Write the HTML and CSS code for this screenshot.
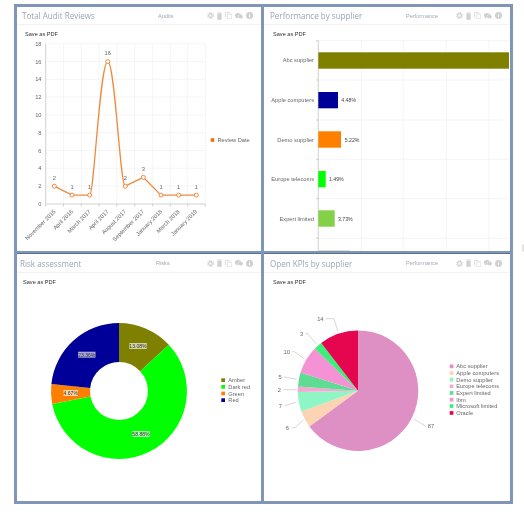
FILE: index.html
```
<!DOCTYPE html>
<html lang="en">
<head>
<meta charset="utf-8">
<title>Dashboard</title>
<link rel="stylesheet" href="styles.css">
</head>
<body>
<svg class="defs" width="0" height="0" aria-hidden="true">
  <symbol id="i-gear" viewBox="0 0 14 14"><circle cx="7" cy="7" r="3.6" fill="none" stroke="currentColor" stroke-width="2.4"/><circle cx="7" cy="7" r="5.8" fill="none" stroke="currentColor" stroke-width="2.2" stroke-dasharray="2.3 2.25"/></symbol>
  <symbol id="i-trash" viewBox="0 0 10 15"><path d="M3.5 0h3v1H10v1.6H0V1h3.5zM.8 3.6h8.4V15H.8z" fill="currentColor"/></symbol>
  <symbol id="i-copy" viewBox="0 0 14 14"><path d="M1 10V1h7l2 2" fill="none" stroke="currentColor" stroke-width="1.2"/><rect x="4.5" y="4" width="9" height="9.5" rx="1" fill="#fff" stroke="currentColor" stroke-width="1.2"/></symbol>
  <symbol id="i-chat" viewBox="0 0 16 12"><ellipse cx="6" cy="4.8" rx="6" ry="4.6" fill="currentColor"/><ellipse cx="11" cy="7" rx="5" ry="4" fill="currentColor" stroke="#fff" stroke-width=".7"/><path d="M13 10l2.5 2-4-1zM3 8l-2 3 4-1.500z" fill="currentColor"/></symbol>
  <symbol id="i-info" viewBox="0 0 14 14"><circle cx="7" cy="7" r="7" fill="currentColor"/><rect x="6" y="3" width="2" height="1.800" fill="#fff"/><rect x="6" y="6" width="2" height="5" fill="#fff"/></symbol>
</svg>

<main class="board">

  <section class="panel panel-a">
    <header class="head">
      <h2 class="title">Total Audit Reviews</h2>
      <span class="sub">Audits</span>
      <div class="tools">
        <svg class="ti ti-gear"><use href="#i-gear"/></svg>
        <svg class="ti ti-trash"><use href="#i-trash"/></svg>
        <svg class="ti ti-copy"><use href="#i-copy"/></svg>
        <svg class="ti ti-chat"><use href="#i-chat"/></svg>
        <svg class="ti ti-info"><use href="#i-info"/></svg>
      </div>
    </header>
    <div class="save">Save as PDF</div>
    <svg class="chart" viewBox="17 40 244 211">
      <g class="grid">
        <path d="M45.700 43.700H205.300M45.700 61.500H205.300M45.700 79.300H205.300M45.700 97.100H205.300M45.700 114.900H205.300M45.700 132.700H205.300M45.700 150.500H205.300M45.700 168.300H205.300M45.700 186.100H205.300"/>
        <path d="M63.500 43.700V204M81.300 43.700V204M99 43.700V204M116.700 43.700V204M134.700 43.700V204M152.700 43.700V204M170.300 43.700V204M187.700 43.700V204M205.300 43.700V204"/>
      </g>
      <path class="axis" d="M45.700 43.700V204H205.300M45.700 204v2.500M63.500 204v2.500M81.300 204v2.500M99 204v2.500M116.700 204v2.500M134.700 204v2.500M152.700 204v2.500M170.300 204v2.500M187.700 204v2.500M205.300 204v2.500"/>
      <g class="t t-end">
        <text x="41.500" y="45.800">18</text><text x="41.500" y="63.600">16</text><text x="41.500" y="81.400">14</text><text x="41.500" y="99.200">12</text><text x="41.500" y="117">10</text><text x="41.500" y="134.800">8</text><text x="41.500" y="152.600">6</text><text x="41.500" y="170.400">4</text><text x="41.500" y="188.200">2</text><text x="41.500" y="206">0</text>
      </g>
      <g class="t t-end">
        <text transform="translate(56 212) rotate(-45)">November 2015</text>
        <text transform="translate(73.500 212) rotate(-45)">April 2016</text>
        <text transform="translate(91 212) rotate(-45)">March 2017</text>
        <text transform="translate(109 212) rotate(-45)">April 2017</text>
        <text transform="translate(126.500 212) rotate(-45)">August 2017</text>
        <text transform="translate(144.500 212) rotate(-45)">September 2017</text>
        <text transform="translate(162.500 212) rotate(-45)">January 2018</text>
        <text transform="translate(180 212) rotate(-45)">March 2018</text>
        <text transform="translate(197.500 212) rotate(-45)">January 2019</text>
      </g>
      <path class="line" d="M54.300 186.200L72 195.100L89.700 195.100C94 195 100 61.600 107.700 61.600C115 61.600 120 186 125.300 186.200L143.300 177.300L161 195.100L196.300 195.100"/>
      <g class="pts">
        <circle cx="54.300" cy="186.200" r="2"/><circle cx="72" cy="195.100" r="2"/><circle cx="89.700" cy="195.100" r="2"/><circle cx="107.700" cy="61.600" r="2"/><circle cx="125.300" cy="186.200" r="2"/><circle cx="143.300" cy="177.300" r="2"/><circle cx="161" cy="195.100" r="2"/><circle cx="178.700" cy="195.100" r="2"/><circle cx="196.300" cy="195.100" r="2"/>
      </g>
      <g class="t t-mid">
        <text x="54.300" y="180">2</text><text x="72" y="189">1</text><text x="89.700" y="189">1</text><text x="107.700" y="55">16</text><text x="125.300" y="180">2</text><text x="143.300" y="171">3</text><text x="161" y="189">1</text><text x="178.700" y="189">1</text><text x="196.300" y="189">1</text>
      </g>
      <rect x="210.700" y="138.300" width="3.500" height="3.500" fill="#f26a10"/>
      <text class="t" x="217.500" y="142.200">Review Date</text>
    </svg>
  </section>

  <section class="panel panel-b">
    <header class="head">
      <h2 class="title">Performance by supplier</h2>
      <span class="sub">Performance</span>
      <div class="tools">
        <svg class="ti ti-gear"><use href="#i-gear"/></svg>
        <svg class="ti ti-trash"><use href="#i-trash"/></svg>
        <svg class="ti ti-copy"><use href="#i-copy"/></svg>
        <svg class="ti ti-chat"><use href="#i-chat"/></svg>
        <svg class="ti ti-info"><use href="#i-info"/></svg>
      </div>
    </header>
    <div class="save">Save as PDF</div>
    <svg class="chart" viewBox="264 40 246 211">
      <g class="grid">
        <path d="M318.300 40.700H510M318.300 80H510M318.300 120H510M318.300 159.300H510M318.300 198.700H510M318.300 238.300H510"/>
        <path d="M361.300 40.700V251M403.700 40.700V251M446.300 40.700V251M489 40.700V251"/>
      </g>
      <path class="axis" d="M318.300 40.700V251M316 40.700h2.300M316 80h2.300M316 120h2.300M316 159.300h2.300M316 198.700h2.300M316 238.300h2.300"/>
      <rect x="318.300" y="52.300" width="190.700" height="16.400" fill="#808000"/>
      <rect x="318.300" y="92" width="19.700" height="16.300" fill="#000099"/>
      <rect x="318.300" y="131.300" width="22.700" height="16.400" fill="#ff8000"/>
      <rect x="318.300" y="171" width="7.400" height="16.300" fill="#00ff00"/>
      <rect x="318.300" y="210.300" width="16.400" height="16.400" fill="#84d046"/>
      <rect x="318.300" y="250" width="31.700" height="2" fill="#e2e2c4"/>
      <g class="t t-end">
        <text x="314" y="62">Abc supplier</text>
        <text x="314" y="102">Apple computers</text>
        <text x="314" y="141.500">Demo supplier</text>
        <text x="314" y="181">Europe telecoms</text>
        <text x="314" y="220.500">Expert limited</text>
      </g>
      <g class="t t-val">
        <text x="341.300" y="102">4.48%</text>
        <text x="344.700" y="141.500">5.22%</text>
        <text x="329" y="181">1.49%</text>
        <text x="338" y="220.500">3.73%</text>
      </g>
    </svg>
  </section>

  <section class="panel panel-c low">
    <header class="head">
      <h2 class="title">Risk assessment</h2>
      <span class="sub">Risks</span>
      <div class="tools">
        <svg class="ti ti-gear"><use href="#i-gear"/></svg>
        <svg class="ti ti-trash"><use href="#i-trash"/></svg>
        <svg class="ti ti-copy"><use href="#i-copy"/></svg>
        <svg class="ti ti-chat"><use href="#i-chat"/></svg>
        <svg class="ti ti-info"><use href="#i-info"/></svg>
      </div>
    </header>
    <div class="save">Save as PDF</div>
    <svg class="chart" viewBox="17 288 244 213">
      <path fill="#808000" d="M119 323A68 68 0 0 1 168.800 344.700L140.200 371.300A29 29 0 0 0 119 362Z"/>
      <path fill="#00ff00" d="M168.800 344.700A68 68 0 1 1 52.200 403.900L90.500 396.500A29 29 0 1 0 140.200 371.300Z"/>
      <path fill="#ff8000" d="M52.200 403.900A68 68 0 0 1 51.400 384L90.200 388A29 29 0 0 0 90.500 396.500Z"/>
      <path fill="#000099" d="M51.400 384A68 68 0 0 1 119 323L119 362A29 29 0 0 0 90.200 388Z"/>
      <g class="tag">
        <rect x="129.300" y="343" width="17.500" height="6"/>
        <rect x="132.300" y="431" width="17.500" height="6"/>
        <rect x="63.500" y="390" width="14.500" height="6"/>
        <rect x="78" y="351.700" width="17.500" height="6"/>
      </g>
      <g class="t t-tag">
        <text x="138" y="348">13.08%</text>
        <text x="141" y="436">58.88%</text>
        <text x="70.700" y="395">4.67%</text>
        <text x="86.700" y="356.700">23.36%</text>
      </g>
      <rect x="221.300" y="378.300" width="3.700" height="3.700" fill="#808000"/>
      <rect x="221.300" y="385" width="3.700" height="3.700" fill="#00ff00"/>
      <rect x="221.300" y="391.600" width="3.700" height="3.700" fill="#ff8000"/>
      <rect x="221.300" y="398.300" width="3.700" height="3.700" fill="#000099"/>
      <g class="t">
        <text x="228.300" y="382.200">Amber</text>
        <text x="228.300" y="388.900">Dark red</text>
        <text x="228.300" y="395.500">Green</text>
        <text x="228.300" y="402.200">Red</text>
      </g>
    </svg>
  </section>

  <section class="panel panel-d low">
    <header class="head">
      <h2 class="title">Open KPIs by supplier</h2>
      <span class="sub">Performance</span>
      <div class="tools">
        <svg class="ti ti-gear"><use href="#i-gear"/></svg>
        <svg class="ti ti-trash"><use href="#i-trash"/></svg>
        <svg class="ti ti-copy"><use href="#i-copy"/></svg>
        <svg class="ti ti-chat"><use href="#i-chat"/></svg>
        <svg class="ti ti-info"><use href="#i-info"/></svg>
      </div>
    </header>
    <div class="save">Save as PDF</div>
    <svg class="chart" viewBox="264 288 246 213">
      <path fill="#de8fc3" d="M358 390.700V330.400A60.300 60.300 0 1 1 309.400 426.400Z"/>
      <path fill="#fcd3b3" d="M358 390.700L309.400 426.400A60.300 60.300 0 0 1 301.400 411.500Z"/>
      <path fill="#8ef5c4" d="M358 390.700L301.400 411.500A60.300 60.300 0 0 1 297.700 392.100Z"/>
      <path fill="#f5a9cf" d="M358 390.700L297.700 392.100A60.300 60.300 0 0 1 297.900 386.500Z"/>
      <path fill="#5edc94" d="M358 390.700L297.900 386.500A60.300 60.300 0 0 1 300.500 372.600Z"/>
      <path fill="#f592d6" d="M358 390.700L300.500 372.600A60.300 60.300 0 0 1 314.900 348.600Z"/>
      <path fill="#3bf079" d="M358 390.700L314.900 348.600A60.300 60.300 0 0 1 321.200 342.900Z"/>
      <path fill="#e60650" d="M358 390.700L321.200 342.900A60.300 60.300 0 0 1 358 330.400Z"/>
      <g class="lead">
        <path d="M414 419L425.700 426.300"/>
        <path d="M325.700 318.700H334L338 332"/>
        <path d="M305.300 333.700H307.700L316.700 344.300"/>
        <path d="M292.300 351.700H294.300L304.700 359"/>
        <path d="M284 377L296.700 379.300"/>
        <path d="M283.300 389.700H296.700"/>
        <path d="M284.700 405.700L296.700 402.300"/>
        <path d="M292 427.700H295L303.300 420"/>
      </g>
      <g class="t t-mid">
        <text x="431" y="427.800">87</text>
        <text x="320.300" y="320.800">14</text>
        <text x="301.700" y="336.100">3</text>
        <text x="286.700" y="353.800">10</text>
        <text x="280" y="378.800">5</text>
        <text x="279.300" y="391.800">2</text>
        <text x="280.300" y="407.800">7</text>
        <text x="287.300" y="429.800">6</text>
      </g>
      <rect x="449.700" y="364.500" width="3.700" height="3.700" fill="#de8fc3"/>
      <rect x="449.700" y="371.200" width="3.700" height="3.700" fill="#fcd3b3"/>
      <rect x="449.700" y="377.800" width="3.700" height="3.700" fill="#8ef5c4"/>
      <rect x="449.700" y="384.500" width="3.700" height="3.700" fill="#f5a9cf"/>
      <rect x="449.700" y="391.100" width="3.700" height="3.700" fill="#5edc94"/>
      <rect x="449.700" y="397.800" width="3.700" height="3.700" fill="#f592d6"/>
      <rect x="449.700" y="404.200" width="3.700" height="3.700" fill="#3bf079"/>
      <rect x="449.700" y="411.100" width="3.700" height="3.700" fill="#e60650"/>
      <g class="t">
        <text x="456.300" y="368.400">Abc supplier</text>
        <text x="456.300" y="375.100">Apple computers</text>
        <text x="456.300" y="381.700">Demo supplier</text>
        <text x="456.300" y="388.400">Europe telecoms</text>
        <text x="456.300" y="395">Expert limited</text>
        <text x="456.300" y="401.700">Ibm</text>
        <text x="456.300" y="408.100">Microsoft limited</text>
        <text x="456.300" y="415">Oracle</text>
      </g>
    </svg>
  </section>

</main>
<div class="edge-tab"></div>
</body>
</html>
```

FILE: styles.css
```
html, body {
  margin: 0;
  padding: 0;
  background: #fff;
}

body {
  width: 524px;
  height: 514px;
  overflow: hidden;
  position: relative;
  font-family: "Liberation Sans", Arial, sans-serif;
}

.defs {
  position: absolute;
}

.board {
  display: grid;
  grid-template-columns: 244px 246px;
  grid-template-rows: 244px 247px;
  gap: 3px;
  width: max-content;
  margin: 4px 0 0 14px;
  padding: 3px;
  background: #7f96b7;
  filter: blur(0.45px);
}

.panel {
  display: flex;
  flex-direction: column;
  min-width: 0;
  min-height: 0;
  overflow: hidden;
  background: #fff;
  --inset: 5px;
}

.panel-b,
.panel-d {
  --inset: 6px;
}

.panel-c {
  --inset: 3px;
}

.low {
  box-shadow: 0 -1px 0 #5c7190;
}

.head {
  display: flex;
  align-items: center;
  flex: none;
  height: 18px;
  box-sizing: border-box;
  padding: 0 8px 0 var(--inset);
  border-bottom: 1px solid #f2f2f2;
}

.low .head {
  height: 19px;
}

.title {
  flex: none;
  width: 136px;
  margin: 0;
  font-family: "Open Sans", sans-serif;
  font-size: 8.05px;
  font-weight: 400;
  white-space: nowrap;
  color: #9aa5b4;
}

.sub {
  font-size: 5.6px;
  color: #a3a8b0;
}

.tools {
  display: flex;
  align-items: center;
  gap: 3px;
  margin-left: auto;
  color: #cfcfcf;
}

.ti {
  display: block;
  height: 7px;
  width: 7px;
}

.ti-trash {
  width: 5px;
  height: 8px;
}

.ti-chat {
  width: 8px;
  height: 6px;
}

.save {
  flex: none;
  box-sizing: border-box;
  height: 15px;
  padding: 6px 0 0 calc(var(--inset) + 3px);
  font-size: 5.6px;
  line-height: 6px;
  color: #333;
}

.chart {
  display: block;
  flex: 1;
  width: 100%;
  min-height: 0;
}

.grid path {
  fill: none;
  stroke: #eeeeee;
  stroke-width: 0.6;
}

.axis {
  fill: none;
  stroke: #bdbdbd;
  stroke-width: 0.7;
}

.t {
  font-size: 5.7px;
  fill: #666;
}

.t-end {
  text-anchor: end;
}

.t-mid {
  text-anchor: middle;
}

.t-val {
  font-size: 5.2px;
  fill: #444;
}

.t-tag {
  font-size: 5.1px;
  text-anchor: middle;
  fill: #333;
}

.tag rect {
  fill: #fff;
  opacity: 0.65;
}

.line {
  fill: none;
  stroke: #ef8a3c;
  stroke-width: 1.3;
}

.pts circle {
  fill: #fff;
  stroke: #ef8a3c;
  stroke-width: 1;
}

.lead path {
  fill: none;
  stroke: #bbbbbb;
  stroke-width: 0.6;
}

.edge-tab {
  position: absolute;
  left: 522px;
  top: 244px;
  width: 4px;
  height: 8px;
  border-radius: 2px;
  background: #e2e2e2;
}
```
